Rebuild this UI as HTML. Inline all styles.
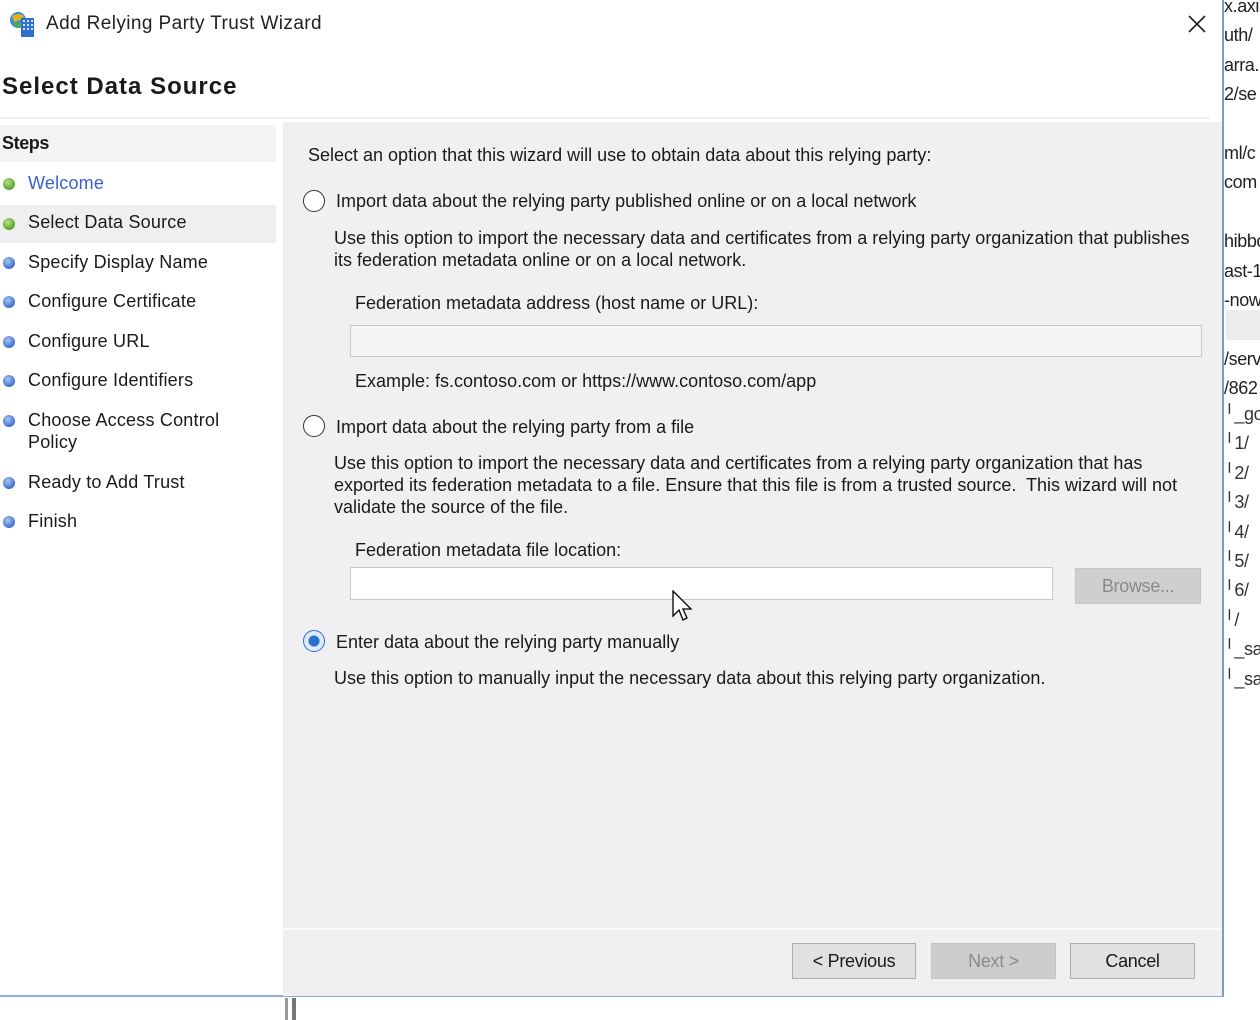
<!DOCTYPE html>
<html><head><meta charset="utf-8"><style>
*{margin:0;padding:0;box-sizing:border-box}
body{width:1260px;height:1020px;overflow:hidden;background:#fff;font-family:"Liberation Sans",sans-serif;color:#1a1a1a;position:relative}
.a{position:absolute;white-space:nowrap;font-size:18px;letter-spacing:0px;line-height:22px}
.st{letter-spacing:0.2px}
.dot{position:absolute;width:12px;height:12px;border-radius:50%}
.g{background:radial-gradient(circle at 40% 35%,#b8e08a,#5aa22a 70%)}
.b{background:radial-gradient(circle at 40% 35%,#a9c4f0,#3d6fd0 70%)}
.radio{position:absolute;width:22px;height:22px;border-radius:50%;border:1.5px solid #333;background:#fff}
.inp{position:absolute;background:#fff;border:1px solid #c9c9c9}
.btn{position:absolute;height:36px;border:1px solid #adadad;background:#e1e1e1;text-align:center;line-height:34px;font-size:18px;letter-spacing:-0.3px}
.bg{position:absolute;font-size:18px;line-height:29.4px;letter-spacing:-0.4px;white-space:pre}
</style></head><body>
<div class="bg" style="left:1224px;top:-8px;color:#222">x.axi
uth/
arra.
2/se

ml/c
com

hibbo
ast-1
-now

/serv
/862</div>
<div class="bg" style="left:1224px;top:400px;color:#333">╵_go
╵1/
╵2/
╵3/
╵4/
╵5/
╵6/
╵/
╵_sa
╵_sa</div>
<div style="position:absolute;left:1226px;top:310px;width:34px;height:30px;background:#ececec"></div>

<div style="position:absolute;left:0;top:0;width:1224px;height:997px;background:#fff;border-right:2px solid #7a9cc8;border-bottom:2px solid #8fb0d3"></div>
<svg style="position:absolute;left:8px;top:10px" width="30" height="28" viewBox="0 0 30 28">
<circle cx="10" cy="10" r="8" fill="#3b8ad8"/><path d="M4 6 q6 -4 12 0 q-3 5 -10 6z" fill="#e0b020"/><path d="M6 12 q4 2 8 0 l1 5 q-5 2 -9 -1z" fill="#4caf50"/>
<rect x="13" y="8" width="13" height="19" fill="#2f6fd0"/><g fill="#cfe3ff"><rect x="15" y="10" width="2" height="2"/><rect x="19" y="10" width="2" height="2"/><rect x="23" y="10" width="2" height="2"/><rect x="15" y="14" width="2" height="2"/><rect x="19" y="14" width="2" height="2"/><rect x="23" y="14" width="2" height="2"/><rect x="15" y="18" width="2" height="2"/><rect x="19" y="18" width="2" height="2"/><rect x="23" y="18" width="2" height="2"/></g></svg>
<div class="a" style="left:46px;top:13px;font-size:19px;letter-spacing:0.4px;color:#222">Add Relying Party Trust Wizard</div>
<svg style="position:absolute;left:1188px;top:15px" width="18" height="18"><path d="M1 1L17 17M17 1L1 17" stroke="#222" stroke-width="1.6"/></svg>
<div class="a" style="left:2px;top:73px;font-size:24px;font-weight:bold;letter-spacing:1px;line-height:28px">Select Data Source</div>
<div style="position:absolute;left:0;top:117px;width:1210px;height:2px;background:#eee"></div>

<div style="position:absolute;left:0;top:125px;width:276px;height:37px;background:#f3f3f3"></div>
<div class="a" style="left:2px;top:132px;font-weight:bold;letter-spacing:-0.4px">Steps</div>
<div style="position:absolute;left:0;top:205px;width:276px;height:38px;background:#efefef"></div>
<div class="dot g" style="left:3px;top:178px"></div><div class="a st" style="left:28px;top:172px;color:#3a5fd0">Welcome</div>
<div class="dot g" style="left:3px;top:218px"></div><div class="a st" style="left:28px;top:211px">Select Data Source</div>
<div class="dot b" style="left:3px;top:257px"></div><div class="a st" style="left:28px;top:251px">Specify Display Name</div>
<div class="dot b" style="left:3px;top:296px"></div><div class="a st" style="left:28px;top:290px">Configure Certificate</div>
<div class="dot b" style="left:3px;top:336px"></div><div class="a st" style="left:28px;top:330px">Configure URL</div>
<div class="dot b" style="left:3px;top:375px"></div><div class="a st" style="left:28px;top:369px">Configure Identifiers</div>
<div class="dot b" style="left:3px;top:415px"></div><div class="a st" style="left:28px;top:409px">Choose Access Control</div>
<div class="a st" style="left:28px;top:431px">Policy</div>
<div class="dot b" style="left:3px;top:477px"></div><div class="a st" style="left:28px;top:471px">Ready to Add Trust</div>
<div class="dot b" style="left:3px;top:516px"></div><div class="a st" style="left:28px;top:510px">Finish</div>

<div style="position:absolute;left:283px;top:122px;width:939px;height:874px;background:#f0eff1"></div>
<div style="position:absolute;left:283px;top:928px;width:939px;height:2px;background:#fbfbfb"></div>

<div class="a" style="left:308px;top:144px">Select an option that this wizard will use to obtain data about this relying party:</div>

<div class="radio" style="left:303px;top:190px"></div>
<div class="a" style="left:336px;top:190px">Import data about the relying party published online or on a local network</div>
<div class="a" style="left:334px;top:227px">Use this option to import the necessary data and certificates from a relying party organization that publishes</div>
<div class="a" style="left:334px;top:249px">its federation metadata online or on a local network.</div>
<div class="a" style="left:355px;top:292px">Federation metadata address (host name or URL):</div>
<div class="inp" style="left:350px;top:325px;width:852px;height:32px;background:#f4f4f4"></div>
<div class="a" style="left:355px;top:370px">Example: fs.contoso.com or https://www.contoso.com/app</div>

<div class="radio" style="left:303px;top:415px"></div>
<div class="a" style="left:336px;top:416px">Import data about the relying party from a file</div>
<div class="a" style="left:334px;top:452px">Use this option to import the necessary data and certificates from a relying party organization that has</div>
<div class="a" style="left:334px;top:474px">exported its federation metadata to a file. Ensure that this file is from a trusted source.&nbsp; This wizard will not</div>
<div class="a" style="left:334px;top:496px">validate the source of the file.</div>
<div class="a" style="left:355px;top:539px">Federation metadata file location:</div>
<div class="inp" style="left:350px;top:567px;width:703px;height:33px"></div>
<div class="btn" style="left:1075px;top:568px;width:126px;color:#8a8a8a;background:#cfcfcf;border-color:#c4c4c4">Browse...</div>

<div class="radio" style="left:303px;top:630px;border-color:#2a6fc9;background:radial-gradient(circle,#2a6fc9 0 5px,#dfe9f7 6px)"></div>
<div class="a" style="left:336px;top:631px">Enter data about the relying party manually</div>
<div class="a" style="left:334px;top:667px">Use this option to manually input the necessary data about this relying party organization.</div>

<svg style="position:absolute;left:672px;top:590px" width="24" height="36" viewBox="0 0 24 36"><path d="M1 1 L1 26 L7 20 L11 30 L15 28 L11 19 L19 19 Z" fill="#fff" stroke="#000" stroke-width="1.3"/></svg>

<div class="btn" style="left:792px;top:943px;width:124px">&lt; Previous</div>
<div class="btn" style="left:931px;top:943px;width:125px;color:#8a8a8a;background:#cdcdcd;border-color:#c4c4c4">Next &gt;</div>
<div class="btn" style="left:1070px;top:943px;width:125px">Cancel</div>

<div style="position:absolute;left:285px;top:998px;width:3px;height:22px;background:#999"></div>
<div style="position:absolute;left:292px;top:998px;width:4px;height:22px;background:#777"></div>
</body></html>
